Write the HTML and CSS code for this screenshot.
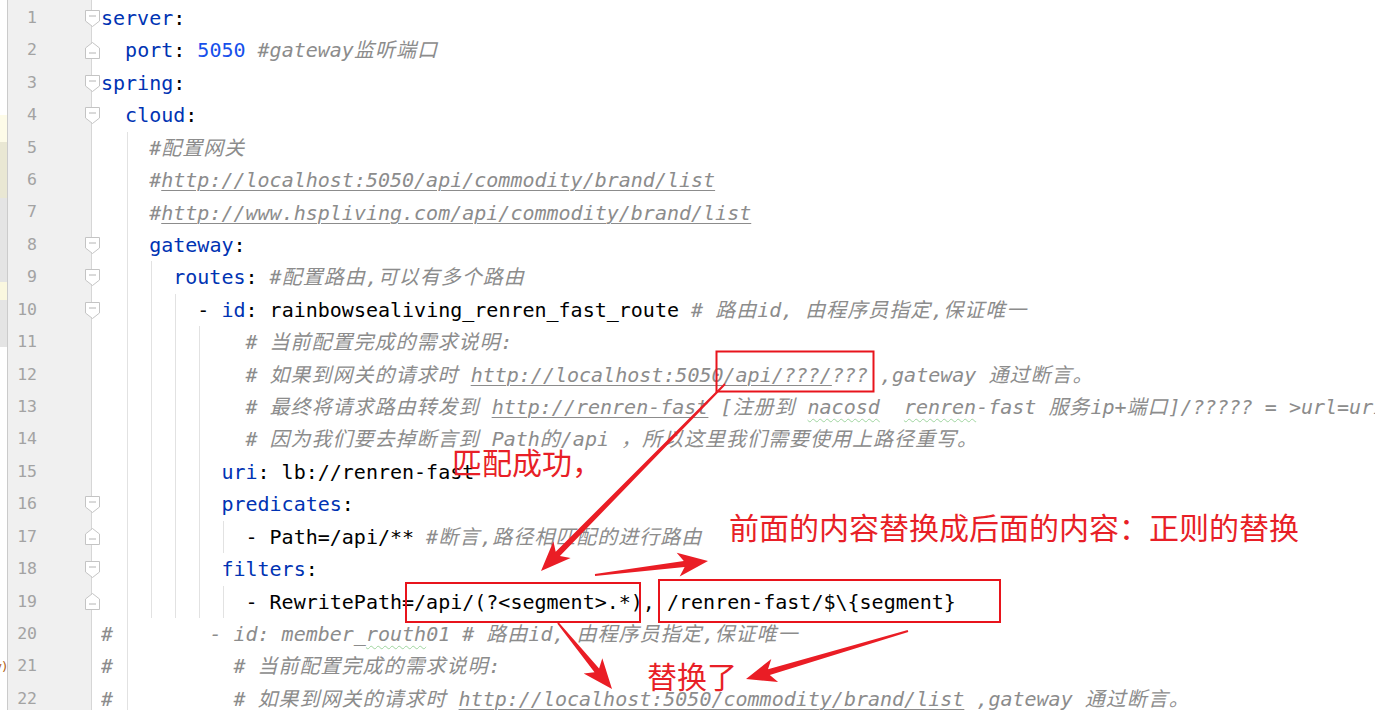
FILE: index.html
```html
<!DOCTYPE html>
<html lang="zh">
<head>
<meta charset="utf-8">
<title>application.yml</title>
<link rel="stylesheet" href="styles.css">
</head>
<body>
<div class="app">
  <div class="side">
    <div class="sb b0"></div>
    <div class="sb b1"></div>
    <div class="sb b2"></div>
    <div class="sb b3"></div>
    <div class="sb b4"></div>
    <div class="sb b5"></div>
    <div class="sb b6"><div class="frag"><span>way)</span></div></div>
  </div>
  <div class="gutter">
    <div class="gl"><span class="num">1</span><svg class="fold" viewBox="0 0 15 17"><path class="fo" d="M0.5 0.5H14.5V11L7.5 16.5L0.5 11Z"/><path class="fm" d="M4 6H11"/></svg></div>
    <div class="gl"><span class="num">2</span><svg class="fold" viewBox="0 0 15 17"><path class="fo" d="M0.5 16.5H14.5V6L7.5 0.5L0.5 6Z"/><path class="fm" d="M4 11H11"/></svg></div>
    <div class="gl"><span class="num">3</span><svg class="fold" viewBox="0 0 15 17"><path class="fo" d="M0.5 0.5H14.5V11L7.5 16.5L0.5 11Z"/><path class="fm" d="M4 6H11"/></svg></div>
    <div class="gl"><span class="num">4</span><svg class="fold" viewBox="0 0 15 17"><path class="fo" d="M0.5 0.5H14.5V11L7.5 16.5L0.5 11Z"/><path class="fm" d="M4 6H11"/></svg></div>
    <div class="gl"><span class="num">5</span></div>
    <div class="gl"><span class="num">6</span></div>
    <div class="gl"><span class="num">7</span></div>
    <div class="gl"><span class="num">8</span><svg class="fold" viewBox="0 0 15 17"><path class="fo" d="M0.5 0.5H14.5V11L7.5 16.5L0.5 11Z"/><path class="fm" d="M4 6H11"/></svg></div>
    <div class="gl"><span class="num">9</span><svg class="fold" viewBox="0 0 15 17"><path class="fo" d="M0.5 0.5H14.5V11L7.5 16.5L0.5 11Z"/><path class="fm" d="M4 6H11"/></svg></div>
    <div class="gl"><span class="num">10</span><svg class="fold" viewBox="0 0 15 17"><path class="fo" d="M0.5 0.5H14.5V11L7.5 16.5L0.5 11Z"/><path class="fm" d="M4 6H11"/></svg></div>
    <div class="gl"><span class="num">11</span></div>
    <div class="gl"><span class="num">12</span></div>
    <div class="gl"><span class="num">13</span></div>
    <div class="gl"><span class="num">14</span></div>
    <div class="gl"><span class="num">15</span></div>
    <div class="gl"><span class="num">16</span><svg class="fold" viewBox="0 0 15 17"><path class="fo" d="M0.5 0.5H14.5V11L7.5 16.5L0.5 11Z"/><path class="fm" d="M4 6H11"/></svg></div>
    <div class="gl"><span class="num">17</span><svg class="fold" viewBox="0 0 15 17"><path class="fo" d="M0.5 16.5H14.5V6L7.5 0.5L0.5 6Z"/><path class="fm" d="M4 11H11"/></svg></div>
    <div class="gl"><span class="num">18</span><svg class="fold" viewBox="0 0 15 17"><path class="fo" d="M0.5 0.5H14.5V11L7.5 16.5L0.5 11Z"/><path class="fm" d="M4 6H11"/></svg></div>
    <div class="gl"><span class="num">19</span><svg class="fold" viewBox="0 0 15 17"><path class="fo" d="M0.5 16.5H14.5V6L7.5 0.5L0.5 6Z"/><path class="fm" d="M4 11H11"/></svg></div>
    <div class="gl"><span class="num">20</span></div>
    <div class="gl"><span class="num">21</span></div>
    <div class="gl"><span class="num">22</span></div>
  </div>
  <div class="editor">
<div class="l"><span class="k">server</span>:</div>
<div class="l">  <span class="k">port</span>: <span class="n">5050</span> <span class="c">#gateway<span class="z">监听端口</span></span></div>
<div class="l"><span class="k">spring</span>:</div>
<div class="l">  <span class="k">cloud</span>:</div>
<div class="l">  <span class="g"></span><span class="c">#<span class="z">配置网关</span></span></div>
<div class="l">  <span class="g"></span><span class="c">#<span class="u">http://localhost:5050/api/commodity/brand/list</span></span></div>
<div class="l">  <span class="g"></span><span class="c">#<span class="u">http://www.hspliving.com/api/commodity/brand/list</span></span></div>
<div class="l">  <span class="g"></span><span class="k">gateway</span>:</div>
<div class="l">  <span class="g"></span><span class="g"></span><span class="k">routes</span>: <span class="c">#<span class="z">配置路由</span>,<span class="z">可以有多个路由</span></span></div>
<div class="l">  <span class="g"></span><span class="g"></span><span class="g"></span>- <span class="k">id</span>: rainbowsealiving_renren_fast_route <span class="c"># <span class="z">路由</span>id, <span class="z">由程序员指定</span>,<span class="z">保证唯一</span></span></div>
<div class="l">  <span class="g"></span><span class="g"></span><span class="g"></span><span class="g"></span>  <span class="c"># <span class="z">当前配置完成的需求说明</span>:</span></div>
<div class="l">  <span class="g"></span><span class="g"></span><span class="g"></span><span class="g"></span>  <span class="c"># <span class="z">如果到网关的请求时</span> <span class="u">http://localhost:5050/api/???/</span>??? ,gateway <span class="z">通过断言。</span></span></div>
<div class="l">  <span class="g"></span><span class="g"></span><span class="g"></span><span class="g"></span>  <span class="c"># <span class="z">最终将请求路由转发到</span> <span class="u">http://renren-fast</span> [<span class="z">注册到</span> <span class="w">nacosd</span>  <span class="w">renren</span>-fast <span class="z">服务</span>ip+<span class="z">端口</span>]/????? = &gt;url=uri/?????</span></div>
<div class="l">  <span class="g"></span><span class="g"></span><span class="g"></span><span class="g"></span>  <span class="c"># <span class="z">因为我们要去掉断言到</span> Path<span class="z">的</span>/api <span class="z">，所以这里我们需要使用上路径重写。</span></span></div>
<div class="l">  <span class="g"></span><span class="g"></span><span class="g"></span><span class="g"></span><span class="k">uri</span>: lb://renren-fast</div>
<div class="l">  <span class="g"></span><span class="g"></span><span class="g"></span><span class="g"></span><span class="k">predicates</span>:</div>
<div class="l">  <span class="g"></span><span class="g"></span><span class="g"></span><span class="g"></span><span class="g"></span>- Path=/api/** <span class="c">#<span class="z">断言</span>,<span class="z">路径相匹配的进行路由</span></span></div>
<div class="l">  <span class="g"></span><span class="g"></span><span class="g"></span><span class="g"></span><span class="k">filters</span>:</div>
<div class="l">  <span class="g"></span><span class="g"></span><span class="g"></span><span class="g"></span><span class="g"></span>- RewritePath=/api/(?&lt;segment&gt;.*), /renren-fast/$\{segment}</div>
<div class="l"><span class="c">#</span> <span class="g"></span><span class="c">     - id: member_<span class="w">routh</span>01 # <span class="z">路由</span>id, <span class="z">由程序员指定</span>,<span class="z">保证唯一</span></span></div>
<div class="l"><span class="c">#</span> <span class="g"></span><span class="c">       # <span class="z">当前配置完成的需求说明</span>:</span></div>
<div class="l"><span class="c">#</span> <span class="g"></span><span class="c">       # <span class="z">如果到网关的请求时</span> <span class="u">http://localhost:5050/commodity/brand/list</span> ,gateway <span class="z">通过断言。</span></span></div>
  </div>
</div>

<svg class="anno" width="1375" height="710" viewBox="0 0 1375 710">
  <rect class="box" x="716.5" y="351.5" width="157" height="40"/>
  <rect class="box" x="406" y="583" width="234" height="39"/>
  <rect class="box" x="659" y="580" width="341" height="42"/>
  <polygon class="arr" points="725.7,384.7 559.9,556 570.6,558 541,571 553.4,541.2 555.7,551.8 724.3,383.3"/>
  <polygon class="arr" points="595.1,576 684.6,566.9 679.7,576.6 708,561 676.7,552.8 683.8,560.9 594.9,574"/>
  <polygon class="arr" points="557.2,623.6 594.5,672.3 583.7,673.4 612,689 602.3,658.2 599.1,668.5 558.8,622.4"/>
  <polygon class="arr" points="907.7,630 768,669.3 771.3,659 746,679 778.1,682 769.8,675.1 908.3,632"/>
</svg>
<div class="lbl lbl1">匹配成功，</div>
<div class="lbl lbl2">前面的内容替换成后面的内容：正则的替换</div>
<div class="lbl lbl3">替换了</div>
</body>
</html>
```

FILE: styles.css
```css
html, body {
  margin: 0;
  padding: 0;
}
body {
  width: 1375px;
  height: 710px;
  overflow: hidden;
  background: #ffffff;
  position: relative;
}
.app {
  display: flex;
  height: 710px;
}

/* far-left partially visible tool panel */
.side {
  flex: none;
  width: 7px;
  border-right: 1px solid #cbcbcb;
  display: flex;
  flex-direction: column;
  overflow: hidden;
}
.sb { flex: none; }
.b0 { height: 115px; background: #ffffff; }
.b1 { height: 27px; background: #fdfbe8; }
.b2 { height: 56px; background: #e9e7d3; }
.b3 { height: 84px; background: #e4e4e4; }
.b4 { height: 18px; background: #faf7df; }
.b5 { height: 47px; background: #e4e4e4; }
.b6 { flex: 1; background: #ffffff; }
.frag {
  margin-top: 312px;
  display: flex;
  justify-content: flex-end;
  font: 13px/16px "DejaVu Sans", sans-serif;
  color: #b0621a;
  white-space: nowrap;
}

/* gutter with line numbers and fold markers */
.gutter {
  flex: none;
  width: 93px;
  padding-top: 2px;
  background: linear-gradient(to right, #f0f0f0 0, #f0f0f0 83px, #d6d6d6 83px, #d6d6d6 84px, #ffffff 84px);
}
.gl {
  height: 32.43px;
  display: flex;
  align-items: center;
}
.num {
  flex: none;
  width: 29px;
  text-align: right;
  font: 16.5px/1 "DejaVu Sans Mono", monospace;
  color: #a3a3a3;
}
.fold {
  flex: none;
  display: block;
  margin-left: 48px;
  width: 15px;
  height: 17px;
}
.fo {
  fill: #ffffff;
  stroke: #c4c4c4;
  stroke-width: 1;
}
.fm {
  stroke: #b4b4b4;
  stroke-width: 1;
}

/* code */
.editor {
  flex: 1;
  overflow: hidden;
  padding-top: 2px;
  font: 20px/32.43px "DejaVu Sans Mono", "Noto Sans CJK SC", monospace;
  color: #000000;
}
.l {
  height: 32.43px;
  white-space: pre;
}
.k { color: #0033b3; }
.n { color: #1750eb; }
.c { color: #8c8c8c; font-style: italic; }
.z {
  font-family: "Noto Sans CJK SC", sans-serif;
  letter-spacing: 1px;
  line-height: 1;
}
.u {
  text-decoration: underline;
  text-decoration-color: #8c8c8c;
  text-decoration-thickness: 1px;
  text-underline-offset: 3px;
}
.w {
  text-decoration: underline wavy #9fd59f;
  text-decoration-thickness: 1px;
  text-underline-offset: 4px;
}
.g {
  display: inline-block;
  width: 2ch;
  height: 32.43px;
  vertical-align: top;
  background: linear-gradient(#e2e2e2, #e2e2e2) 2px 0 / 1px 100% no-repeat;
}

/* red annotations drawn over the editor */
.anno {
  position: absolute;
  left: 0;
  top: 0;
  pointer-events: none;
}
.box {
  fill: none;
  stroke: #e8141c;
  stroke-width: 2;
}
.arr {
  fill: #ea1d25;
}
.lbl {
  position: absolute;
  font: 30px/30px "Noto Sans CJK SC", sans-serif;
  color: #e81f27;
  white-space: nowrap;
}
.lbl1 { left: 452px; top: 446px; }
.lbl2 { left: 729px; top: 511px; }
.lbl3 { left: 647px; top: 660px; }
```
